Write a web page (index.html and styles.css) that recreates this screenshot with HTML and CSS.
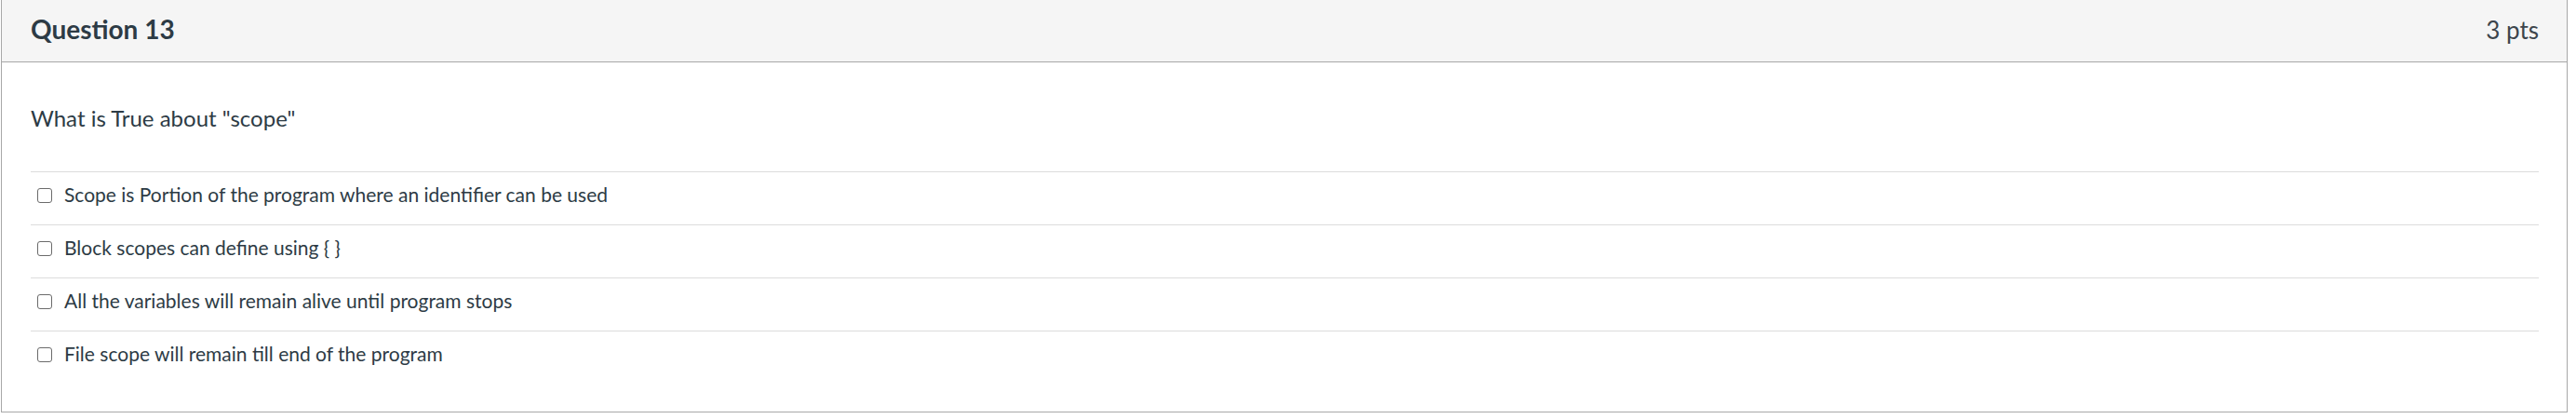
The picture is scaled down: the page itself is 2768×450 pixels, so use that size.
FILE: index.html
```html
<!DOCTYPE html>
<html lang="en">
<head>
<meta charset="utf-8">
<title>Question 13</title>
<link rel="stylesheet" href="styles.css">
</head>
<body>
<div class="card">
  <div class="card-header">
    <span class="q-name">Question 13</span>
    <span class="q-points">3 pts</span>
  </div>
  <div class="card-body">
    <div class="q-text">What is True about "scope"</div>
    <div class="answers">
      <label class="answer"><span class="box"></span><span class="answer-text">Scope is Portion of the program where an identifier can be used</span></label>
      <label class="answer"><span class="box"></span><span class="answer-text">Block scopes can define using { }</span></label>
      <label class="answer"><span class="box"></span><span class="answer-text">All the variables will remain alive until program stops</span></label>
      <label class="answer"><span class="box"></span><span class="answer-text">File scope will remain till end of the program</span></label>
    </div>
  </div>
</div>
</body>
</html>
```

FILE: styles.css
```css
html, body {
  margin: 0;
  padding: 0;
  background: #ffffff;
}
body {
  font-family: Lato, "Liberation Sans", sans-serif;
  color: #2d3b45;
}
.card {
  margin: -1px 0 0 1px;
  width: 2756px;
  border: 1px solid #a8a8a8;
  background: #ffffff;
}
.card-header {
  height: 67px;
  box-sizing: border-box;
  padding: 14px 30px 0 31px;
  background: #f5f5f5;
  border-bottom: 1px solid #a8a8a8;
  display: flex;
  justify-content: space-between;
  align-items: baseline;
}
.q-name {
  font-weight: 700;
  font-size: 28px;
  line-height: 35px;
}
.q-points {
  font-size: 26px;
  line-height: 35px;
  color: #3d454c;
}
.card-body {
  padding: 45px 30px 30px 31px;
}
.q-text {
  font-size: 24px;
  line-height: 30px;
  padding-bottom: 42px;
}
.answers {
  display: flex;
  flex-direction: column;
}
.answer {
  display: flex;
  align-items: flex-start;
  border-top: 1px solid #dcdcdc;
  height: 56px;
  padding-left: 7px;
}
.box {
  width: 14px;
  height: 14px;
  border: 1.5px solid #6b6b6b;
  border-radius: 3px;
  margin-top: 17px;
  flex: none;
}
.answer-text {
  font-size: 21px;
  line-height: 27px;
  padding-top: 10px;
  margin-left: 13px;
}
```
